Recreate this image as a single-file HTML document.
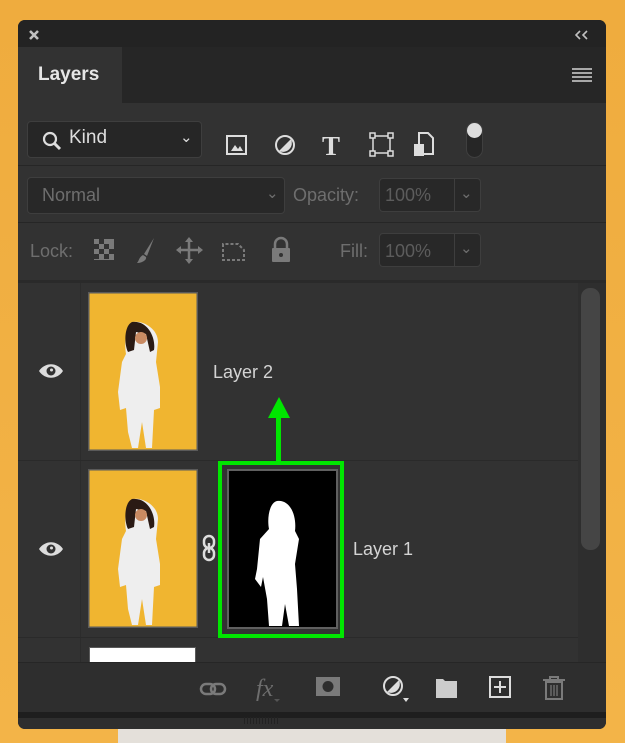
<!DOCTYPE html>
<html><head><style>
*{margin:0;padding:0;box-sizing:border-box}
body{width:625px;height:743px;overflow:hidden;background:linear-gradient(180deg,#efac3e,#f3b448);position:relative;font-family:"Liberation Sans",sans-serif}
.a{position:absolute}
.t{color:#c8c8c8}
.g{color:#6e6e6e}
.box{border:1px solid #3e3e3e;border-radius:4px;background:#282828}
</style></head><body>
<div class="a" style="left:118px;top:726px;width:388px;height:17px;background:#e4e0da"></div>
<div class="a" style="left:18px;top:20px;width:588px;height:709px;background:#323232;border-radius:7px;overflow:hidden">
 <div class="a" style="left:0;top:0;width:588px;height:27px;background:#232323"></div>
 <svg class="a" style="left:10px;top:9px" width="12" height="12"><path d="M2 2 L10 10 M10 2 L2 10" stroke="#c0c0c0" stroke-width="2.6"/></svg>
 <svg class="a" style="left:557px;top:10px" width="14" height="10"><path d="M5 1 L1 5 L5 9 M12 1 L8 5 L12 9" fill="none" stroke="#c0c0c0" stroke-width="1.6"/></svg>
 <div class="a" style="left:0;top:27px;width:588px;height:56px;background:#262626"></div>
 <div class="a" style="left:0;top:27px;width:104px;height:56px;background:#323232"></div>
 <div class="a" style="left:20px;top:44px;font-size:19px;font-weight:bold;color:#e6e6e6">Layers</div>
 <div class="a" style="left:554px;top:48px;width:20px;height:14px;background:repeating-linear-gradient(#a8a8a8 0 2px,transparent 2px 4px)"></div>
 <!-- toolbar -->
 <div class="a box" style="left:9px;top:101px;width:175px;height:37px;background:#262626"></div>
 <svg class="a" style="left:23px;top:110px" width="22" height="22"><circle cx="9" cy="9" r="6" fill="none" stroke="#ddd" stroke-width="2.2"/><line x1="13" y1="13" x2="19" y2="19" stroke="#ddd" stroke-width="3"/></svg>
 <div class="a" style="left:51px;top:107px;font-size:19px;color:#ddd">Kind</div>
 <div class="a" style="left:162px;top:108px;font-size:15px;color:#ddd">⌄</div>
 <svg class="a" style="left:205px;top:107px" width="240" height="52">
  <rect x="4" y="9" width="19" height="18" fill="none" stroke="#ddd" stroke-width="2"/>
  <path d="M8 24 L12 18 L15 22 L17 19 L20 24Z" fill="#ddd"/>
  <circle cx="62" cy="18" r="9" fill="none" stroke="#ddd" stroke-width="2"/><path d="M68 12 A9 9 0 0 1 56 24Z" fill="#ddd"/>
  <text x="99" y="28" font-family="Liberation Serif" font-size="27" font-weight="bold" fill="#ddd">T</text>
  <rect x="150" y="9" width="17" height="17" fill="none" stroke="#ddd" stroke-width="1.5"/>
  <g fill="#323232" stroke="#ddd" stroke-width="1.5"><rect x="147" y="6" width="5" height="5"/><rect x="165" y="6" width="5" height="5"/><rect x="147" y="24" width="5" height="5"/><rect x="165" y="24" width="5" height="5"/></g>
  <path d="M196 6 L205 6 L210 11 L210 27 L196 27Z" fill="none" stroke="#ddd" stroke-width="2"/><rect x="191" y="17" width="10" height="12" fill="#ddd"/>
 </svg>
 <div class="a" style="left:448px;top:102px;width:17px;height:36px;border-radius:9px;background:#262626;border:1px solid #3f3f3f"></div>
 <div class="a" style="left:449px;top:103px;width:15px;height:15px;border-radius:50%;background:#ddd"></div>
 <div class="a" style="left:0;top:145px;width:588px;height:1px;background:#262626"></div>
 <div class="a box" style="left:9px;top:157px;width:258px;height:37px"></div>
 <div class="a g" style="left:24px;top:165px;font-size:18px">Normal</div>
 <div class="a g" style="left:248px;top:164px;font-size:15px">⌄</div>
 <div class="a g" style="left:275px;top:165px;font-size:18px">Opacity:</div>
 <div class="a box" style="left:361px;top:158px;width:102px;height:34px"></div>
 <div class="a" style="left:436px;top:158px;width:1px;height:34px;background:#3e3e3e"></div>
 <div class="a" style="left:367px;top:165px;font-size:18px;color:#5c5c5c">100%</div>
 <div class="a g" style="left:442px;top:164px;font-size:15px">⌄</div>
 <div class="a" style="left:0;top:202px;width:588px;height:1px;background:#262626"></div>
 <div class="a g" style="left:12px;top:221px;font-size:18px">Lock:</div>
 <svg class="a" style="left:74px;top:216px" width="200" height="32">
  <rect x="2" y="3" width="20" height="21" fill="#7a7a7a"/><g fill="#323232"><rect x="7" y="3" width="5" height="5"/><rect x="2" y="8" width="5" height="5"/><rect x="12" y="8" width="5" height="5"/><rect x="7" y="13" width="5" height="5"/><rect x="17" y="13" width="5" height="5"/><rect x="2" y="18" width="5" height="5"/><rect x="12" y="18" width="5" height="5"/></g>
  <path d="M62 2 L52 18 L55 20Z" fill="#7a7a7a"/><path d="M51 19 C47 21 47 25 45 27 C50 27 55 24 54 21Z" fill="#7a7a7a"/>
  <path d="M97 4 L97 25 M87 14 L108 14" stroke="#7a7a7a" stroke-width="2.5"/><path d="M97 1 L93 6 L101 6Z M97 28 L93 23 L101 23Z M84 14 L89 10 L89 18Z M111 14 L106 10 L106 18Z" fill="#7a7a7a"/>
  <path d="M131 8 L131 24 L152 24 L152 14 L146 8Z" fill="none" stroke="#7a7a7a" stroke-width="2" stroke-dasharray="3 2"/>
  <path d="M183 12 L183 8 A6 6 0 0 1 195 8 L195 12" fill="none" stroke="#7a7a7a" stroke-width="2.5"/><rect x="180" y="12" width="18" height="14" rx="1" fill="#7a7a7a"/><circle cx="189" cy="19" r="2" fill="#323232"/>
 </svg>
 <div class="a g" style="left:322px;top:221px;font-size:18px">Fill:</div>
 <div class="a box" style="left:361px;top:213px;width:102px;height:34px"></div>
 <div class="a" style="left:436px;top:213px;width:1px;height:34px;background:#3e3e3e"></div>
 <div class="a" style="left:367px;top:221px;font-size:18px;color:#5c5c5c">100%</div>
 <div class="a g" style="left:442px;top:219px;font-size:15px">⌄</div>
 <div class="a" style="left:0;top:260px;width:588px;height:3px;background:#2a2a2a"></div>
 <!-- layers list -->
 <div class="a" style="left:62px;top:263px;width:1px;height:380px;background:#2c2c2c"></div>
 <div class="a" style="left:0;top:440px;width:560px;height:1px;background:#2a2a2a"></div>
 <div class="a" style="left:0;top:617px;width:560px;height:1px;background:#2a2a2a"></div>
 <div class="a" style="left:560px;top:263px;width:28px;height:380px;background:#2e2e2e"></div>
 <div class="a" style="left:563px;top:268px;width:19px;height:262px;background:#454545;border-radius:9px"></div>
 <svg class="a" style="left:20px;top:342px" width="26" height="18"><path d="M1 9 C7 0 19 0 25 9 C19 18 7 18 1 9Z" fill="#ddd"/><circle cx="13" cy="9" r="4.5" fill="#323232"/><circle cx="13.5" cy="8" r="1.5" fill="#ddd"/></svg>
 <svg class="a" style="left:20px;top:520px" width="26" height="18"><path d="M1 9 C7 0 19 0 25 9 C19 18 7 18 1 9Z" fill="#ddd"/><circle cx="13" cy="9" r="4.5" fill="#323232"/><circle cx="13.5" cy="8" r="1.5" fill="#ddd"/></svg>
 <!-- thumbs -->
 <svg class="a" style="left:70px;top:272px" width="110" height="159" viewBox="0 0 110 159"><rect x="0.5" y="0.5" width="109" height="158" fill="#f0b530" stroke="#5a5a5a" stroke-width="2"/><path d="M45 30 C38 32 36 50 38 62 L34 70 L30 100 L32 118 L38 116 L40 140 L44 156 L50 156 L54 130 L58 156 L64 156 L66 118 L72 116 L72 95 L68 70 L70 50 C70 36 54 28 45 30Z" fill="#eee"/><path d="M44 30 C36 34 36 52 40 60 L46 58 L48 40 L58 42 L62 60 L66 58 C68 46 60 28 44 30Z" fill="#2a1a14"/><circle cx="53" cy="46" r="6" fill="#c98a62"/></svg>
 <div class="a t" style="left:195px;top:342px;font-size:18px;color:#d4d4d4">Layer 2</div>
 <svg class="a" style="left:70px;top:449px" width="110" height="159" viewBox="0 0 110 159"><rect x="0.5" y="0.5" width="109" height="158" fill="#f0b530" stroke="#5a5a5a" stroke-width="2"/><path d="M45 30 C38 32 36 50 38 62 L34 70 L30 100 L32 118 L38 116 L40 140 L44 156 L50 156 L54 130 L58 156 L64 156 L66 118 L72 116 L72 95 L68 70 L70 50 C70 36 54 28 45 30Z" fill="#eee"/><path d="M44 30 C36 34 36 52 40 60 L46 58 L48 40 L58 42 L62 60 L66 58 C68 46 60 28 44 30Z" fill="#2a1a14"/><circle cx="53" cy="46" r="6" fill="#c98a62"/></svg>
 <svg class="a" style="left:184px;top:514px" width="16" height="30"><rect x="2" y="2" width="10" height="12" rx="5" fill="none" stroke="#ddd" stroke-width="2.5"/><rect x="2" y="14" width="10" height="12" rx="5" fill="none" stroke="#ddd" stroke-width="2.5"/><line x1="7" y1="9" x2="7" y2="19" stroke="#ddd" stroke-width="2.5"/></svg>
 <div class="a" style="left:200px;top:441px;width:126px;height:177px;border:4px solid #00e600"></div>
 <svg class="a" style="left:209px;top:449px" width="111" height="160" viewBox="0 0 111 160"><rect x="1" y="1" width="109" height="158" fill="#000" stroke="#606060" stroke-width="2"/><path d="M50 32 C42 34 40 50 42 60 L33 70 L30 100 L28 110 L34 118 L36 108 L40 130 L42 157 L55 157 L58 135 L62 157 L72 157 L70 120 L68 95 L72 70 L68 62 C70 45 62 30 50 32Z" fill="#fff"/></svg>
 <div class="a" style="left:258px;top:395px;width:5px;height:46px;background:#00e600"></div>
 <svg class="a" style="left:249px;top:375px" width="24" height="24"><path d="M12 2 L23 23 L1 23Z" fill="#00e600"/></svg>
 <div class="a t" style="left:335px;top:519px;font-size:18px;color:#d4d4d4">Layer 1</div>
 <div class="a" style="left:71px;top:627px;width:107px;height:16px;background:#fff;border:1px solid #5a5a5a;border-bottom:none"></div>
 <!-- bottom bar -->
 <div class="a" style="left:0;top:642px;width:588px;height:50px;background:#2e2e2e;border-top:1px solid #262626"></div>
 <svg class="a" style="left:180px;top:652px" width="380" height="34">
  <rect x="3" y="12" width="14" height="10" rx="5" fill="none" stroke="#7a7a7a" stroke-width="2.5"/><rect x="13" y="12" width="14" height="10" rx="5" fill="none" stroke="#7a7a7a" stroke-width="2.5"/>
  <text x="58" y="24" font-family="Liberation Serif" font-style="italic" font-size="24" fill="#6e6e6e">fx</text><path d="M76 27 L82 27 L79 30Z" fill="#555"/>
  <rect x="118" y="5" width="24" height="19" fill="#7a7a7a"/><circle cx="130" cy="14.5" r="5.5" fill="#2e2e2e"/>
  <circle cx="195" cy="14" r="9" fill="none" stroke="#ddd" stroke-width="2"/><path d="M201 8 A9 9 0 0 1 189 20Z" fill="#ddd"/><path d="M205 26 L211 26 L208 30Z" fill="#ddd"/>
  <path d="M238 7 L245 7 L247 9 L259 9 L259 26 L238 26Z" fill="#ccc"/>
  <rect x="292" y="5" width="20" height="20" fill="none" stroke="#ddd" stroke-width="2"/><path d="M302 9 L302 21 M296 15 L308 15" stroke="#ddd" stroke-width="2"/>
  <path d="M345 8 L367 8 M352 8 L352 5 L360 5 L360 8" fill="none" stroke="#7a7a7a" stroke-width="2"/><rect x="348" y="10" width="16" height="17" fill="none" stroke="#7a7a7a" stroke-width="2"/><path d="M353 13 L353 24 M356 13 L356 24 M359 13 L359 24" stroke="#7a7a7a" stroke-width="1.2"/>
 </svg>
 <div class="a" style="left:0;top:692px;width:588px;height:6px;background:#1e1e1e"></div>
 <div class="a" style="left:0;top:698px;width:588px;height:11px;background:#2e2e2e"></div>
 <div class="a" style="left:226px;top:697px;width:34px;height:7px;background:repeating-linear-gradient(90deg,#222 0 1px,transparent 1px 3px)"></div>
</div>
</body></html>
